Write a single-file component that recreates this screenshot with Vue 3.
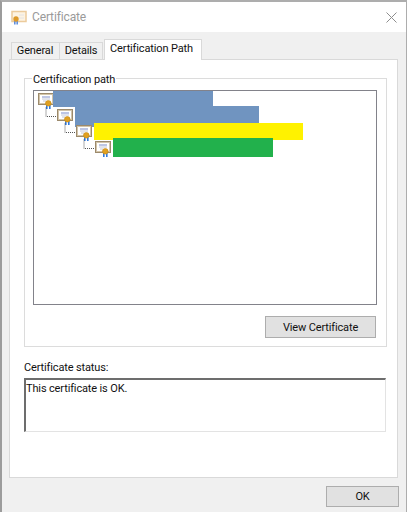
<script setup>
const nodes = [
  { color: '#7094c0', width: 160, top: 0, height: 16 },
  { color: '#7094c0', width: 184, top: -3, height: 21 },
  { color: '#fff200', width: 209, top: -2, height: 17 },
  { color: '#22b14c', width: 160, top: -3, height: 19 },
]
</script>

<template>
  <div class="window">
    <header class="titlebar">
      <svg class="title-icon" width="16" height="16" viewBox="0 0 16 16">
        <rect x="1" y="1.500" width="14" height="10" fill="#fdf3e2" stroke="#eccb9c" stroke-width="1.500" />
        <path d="M8 5h5M8 8h5" stroke="#e4e4e4" />
        <path d="M3 10h1.600v4.500H3zM5.400 10H7v4.500H5.400z" fill="#5f8fe0" />
        <circle cx="5" cy="9" r="2.700" fill="#dd9a2a" />
      </svg>
      <span class="title">Certificate</span>
      <svg class="close" width="11" height="11" viewBox="0 0 11 11">
        <path d="M.5.5l10 10M10.500.5l-10 10" stroke="#8d8d8d" fill="none" />
      </svg>
    </header>

    <div class="body">
      <nav class="tabs">
        <span class="tab general">General</span>
        <span class="tab details">Details</span>
        <span class="tab active">Certification Path</span>
      </nav>

      <section class="panel">
        <div class="group">
          <span class="legend">Certification path</span>
          <div class="tree">
            <div
              v-for="(n, i) in nodes"
              :key="i"
              class="row"
              :style="{ marginLeft: i * 19 + 'px' }"
            >
              <svg class="cert" width="17" height="17" viewBox="0 0 17 17">
                <path
                  v-if="i > 0"
                  d="M-11-1.500V7.500H0"
                  stroke="#555"
                  stroke-dasharray="1 1"
                  fill="none"
                />
                <rect x="0.500" y="0.500" width="15" height="11" fill="#fff" stroke="#9c8a6c" />
                <rect x="1.500" y="1.500" width="13" height="9" fill="none" stroke="#d2c4aa" />
                <path d="M4 4h8" stroke="#7d8cc8" />
                <path d="M4 6h8M5 8h3" stroke="#c4c8d8" />
                <path d="M8 12h1.600v4H8zM11 12h1.600v4H11z" fill="#2f79dd" />
                <circle cx="10.300" cy="10.300" r="2.800" fill="#e0a020" stroke="#c78a12" stroke-width=".6" />
              </svg>
              <span
                class="bar"
                :style="{ background: n.color, width: n.width + 'px', height: n.height + 'px', marginTop: n.top + 'px' }"
              ></span>
            </div>
          </div>
          <div class="actions">
            <button class="btn view">View Certificate</button>
          </div>
        </div>

        <div class="status-label">Certificate status:</div>
        <div class="status">This certificate is OK.</div>
      </section>

      <footer class="footer">
        <button class="btn ok">OK</button>
      </footer>
    </div>
  </div>
</template>

<style>
html, body { margin: 0; background: #f0f0f0; }
</style>

<style scoped>
* { box-sizing: border-box; }
.window {
  width: 407px;
  height: 512px;
  overflow: hidden;
  border-top: 2px solid #adadad;
  border-left: 2px solid #9c9c9c;
  border-right: 1px solid #adadad;
  background: #f0f0f0;
  color: #111;
  font: 11px/16px Roboto, "Open Sans", sans-serif;
  letter-spacing: -0.14px;
  display: flex;
  flex-direction: column;
}
.titlebar {
  height: 30px;
  flex: none;
  background: #fff;
  display: flex;
  align-items: center;
  padding: 0 8px 0 9px;
}
.title-icon { flex: none; margin-top: 1px; }
.title { margin-left: 5px; color: #9a9a9a; font-size: 12px; }
.close { margin-left: auto; margin-right: 1px; margin-top: 0; }
.body { flex: 1; padding: 7px 0 0 7px; display: flex; flex-direction: column; }
.tabs { display: flex; align-items: flex-end; height: 20px; padding-left: 2px; position: relative; z-index: 1; }
.tab {
  height: 17px;
  border: 1px solid #d9d9d9;
  border-bottom: none;
  background: #f0f0f0;
  display: flex;
  align-items: center;
  justify-content: center;
  white-space: nowrap;
}
.general { width: 49px; padding-right: 1px; }
.details { width: 43px; border-left: none; }
.active {
  width: 98px;
  height: 21px;
  margin-bottom: -1px;
  margin-left: 1px;
  background: #fff;
  padding: 0 3px 2px 0;
}
.panel {
  width: 389px;
  height: 419px;
  background: #fff;
  border: 1px solid #d9d9d9;
  padding: 18px 0 0 14px;
}
.group {
  width: 363px;
  height: 269px;
  border: 1px solid #dcdcdc;
  padding: 0 9px 0 8px;
}
.legend {
  display: block;
  width: fit-content;
  margin-top: -9px;
  margin-left: -1px;
  padding: 0 1px;
  height: 20px;
  background: #fff;
  line-height: 19px;
}
.tree {
  width: 344px;
  height: 215px;
  border: 1px solid #82828a;
  padding: 2px 0 0 4px;
  overflow: hidden;
  margin-top: 0;
}
.row { height: 16px; display: flex; align-items: flex-start; }
.cert { flex: none; overflow: visible; }
.row:first-child .bar { position: relative; top: -2px; margin-left: -2px; }
.bar { flex: none; margin-left: 1px; }
.row:not(:first-child) .bar { margin-left: 1px; }
.actions { display: flex; justify-content: flex-end; margin-top: 11px; padding-right: 1px; }
.btn {
  font: inherit;
  letter-spacing: inherit;
  color: #111;
  background: #e1e1e1;
  border: 1px solid #adadad;
  padding: 0;
  display: block;
}
.view { width: 111px; height: 22px; padding-top: 1px; }
.status-label { margin-top: 12px; margin-left: 0; height: 19px; line-height: 18px; }
.status {
  width: 362px;
  height: 54px;
  border: 1px solid #e3e3e3;
  border-top: 2px solid #6d6d6d;
  border-left: 2px solid #6d6d6d;
  line-height: 18px;
}
.footer { display: flex; justify-content: flex-end; padding: 8px 7px 0 0; }
.ok { width: 73px; height: 21px; }
</style>
